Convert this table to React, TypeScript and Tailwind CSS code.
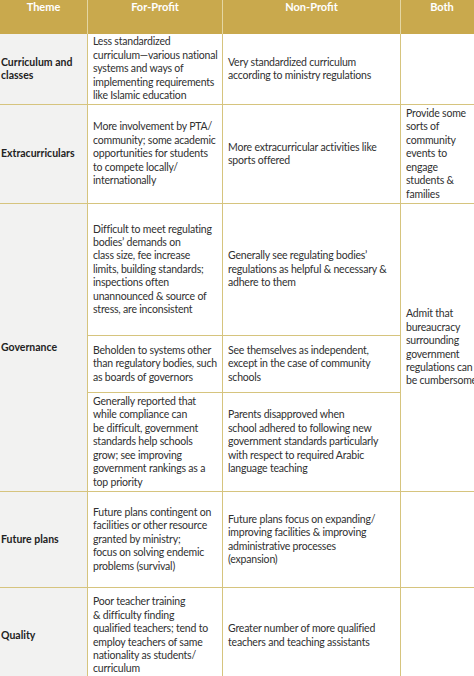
import React from "react";

const LINE = "border-[#d6c47e]";

function Lines({ lines }: { lines: string[] }) {
  return (
    <div>
      {lines.map((l, i) => (
        <div key={i} className="whitespace-nowrap">
          {l}
        </div>
      ))}
    </div>
  );
}

function Theme({ lines, rows }: { lines: string[]; rows?: string }) {
  return (
    <div
      className={`flex items-center bg-[#f2f2f1] border-b border-r ${LINE} pl-[1px] font-bold text-[#222222] ${rows ?? ""}`}
    >
      <Lines lines={lines} />
    </div>
  );
}

function Cell({ lines, rows, last }: { lines: string[]; rows?: string; last?: boolean }) {
  return (
    <div
      className={`flex items-center bg-white border-b ${last ? "" : "border-r"} ${LINE} px-[5px] tracking-[-0.2px] text-[#303030] ${rows ?? ""}`}
    >
      <Lines lines={lines} />
    </div>
  );
}

export default function App() {
  return (
    <div
      className="w-[474px] h-[676px] overflow-hidden bg-white"
      style={{ fontFamily: "Lato, 'Noto Sans', sans-serif" }}
    >
      <div className="grid w-[483px] grid-cols-[88px_135px_178px_82px] grid-rows-[34px_71px_99px_132px_57px_99px_96px_96px] text-[10.5px] leading-[13.4px]">
        {/* header */}
        <div className="flex justify-center bg-[#c9a94d] border-r border-[#e4d6a2] text-[11px] font-bold text-white">
          Theme
        </div>
        <div className="flex justify-center bg-[#c9a94d] border-r border-[#e4d6a2] text-[11px] font-bold text-white">
          For-Profit
        </div>
        <div className="flex justify-center bg-[#c9a94d] border-r border-[#e4d6a2] text-[11px] font-bold text-white">
          Non-Profit
        </div>
        <div className="flex justify-center bg-[#c9a94d] text-[11px] font-bold text-white">
          Both
        </div>

        {/* Curriculum */}
        <Theme lines={["Curriculum and", "classes"]} />
        <Cell
          lines={[
            "Less standardized",
            "curriculum\u2014various national",
            "systems and ways of",
            "implementing requirements",
            "like Islamic education",
          ]}
        />
        <Cell lines={["Very standardized curriculum", "according to ministry regulations"]} />
        <Cell lines={[]} last />

        {/* Extracurriculars */}
        <Theme lines={["Extracurriculars"]} />
        <Cell
          lines={[
            "More involvement by PTA/",
            "community; some academic",
            "opportunities for students",
            "to compete locally/",
            "internationally",
          ]}
        />
        <Cell lines={["More extracurricular activities like", "sports offered"]} />
        <Cell
          lines={["Provide some", "sorts of", "community", "events to", "engage", "students &", "families"]}
          last
        />

        {/* Governance */}
        <Theme lines={["Governance"]} rows="row-span-3" />
        <Cell
          lines={[
            "Difficult to meet regulating",
            "bodies\u2019 demands on",
            "class size, fee increase",
            "limits, building standards;",
            "inspections often",
            "unannounced & source of",
            "stress, are inconsistent",
          ]}
        />
        <Cell
          lines={[
            "Generally see regulating bodies\u2019",
            "regulations as helpful & necessary &",
            "adhere to them",
          ]}
        />
        <Cell
          lines={["Admit that", "bureaucracy", "surrounding", "government", "regulations can", "be cumbersome"]}
          rows="row-span-3"
          last
        />
        <Cell
          lines={["Beholden to systems other", "than regulatory bodies, such", "as boards of governors"]}
        />
        <Cell
          lines={["See themselves as independent,", "except in the case of community", "schools"]}
        />
        <Cell
          lines={[
            "Generally reported that",
            "while compliance can",
            "be difficult, government",
            "standards help schools",
            "grow; see improving",
            "government rankings as a",
            "top priority",
          ]}
        />
        <Cell
          lines={[
            "Parents disapproved when",
            "school adhered to following new",
            "government standards particularly",
            "with respect to required Arabic",
            "language teaching",
          ]}
        />

        {/* Future plans */}
        <Theme lines={["Future plans"]} />
        <Cell
          lines={[
            "Future plans contingent on",
            "facilities or other resource",
            "granted by ministry;",
            "focus on solving endemic",
            "problems (survival)",
          ]}
        />
        <Cell
          lines={[
            "Future plans focus on expanding/",
            "improving facilities & improving",
            "administrative processes",
            "(expansion)",
          ]}
        />
        <Cell lines={[]} last />

        {/* Quality */}
        <Theme lines={["Quality"]} />
        <Cell
          lines={[
            "Poor teacher training",
            "& difficulty finding",
            "qualified teachers; tend to",
            "employ teachers of same",
            "nationality as students/",
            "curriculum",
          ]}
        />
        <Cell lines={["Greater number of more qualified", "teachers and teaching assistants"]} />
        <Cell lines={[]} last />
      </div>
    </div>
  );
}
